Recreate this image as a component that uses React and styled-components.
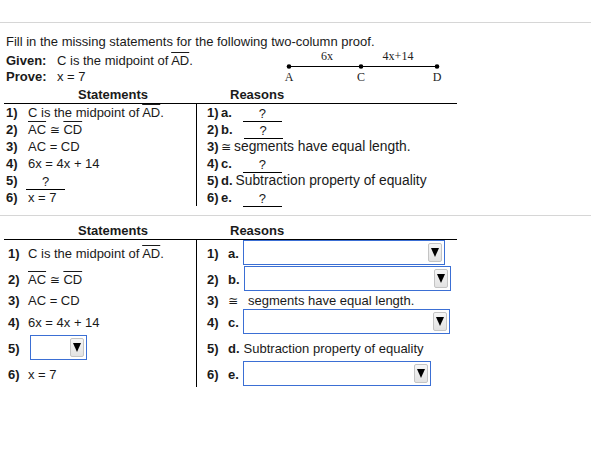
import styled, { createGlobalStyle } from "styled-components";

const GlobalStyle = createGlobalStyle`
    body{
        margin: 0;
        background: #fff;
        font-family: "Liberation Sans", Arial, sans-serif;
        font-size: 13px;
        color: #1a1a1a;
    }
`

function firstRows(){
    return [
        { n: '1)', s: <>C is the midpoint of <Over>AD</Over>.</>, l: 'a.', r: <Blank>?</Blank> },
        { n: '2)', s: <><Over>AC</Over> <Cong>≅</Cong> <Over>CD</Over></>, l: 'b.', r: <Blank>?</Blank> },
        { n: '3)', s: 'AC = CD', l: <Cong>≅</Cong>, r: 'segments have equal length.', plain: true, cong: true },
        { n: '4)', s: '6x = 4x + 14', l: 'c.', r: <Blank>?</Blank> },
        { n: '5)', s: <Blank left>?</Blank>, l: 'd.', r: 'Subtraction property of equality', plain: true },
        { n: '6)', s: 'x = 7', l: 'e.', r: <Blank>?</Blank> },
    ];
}

function secondRows(){
    return [
        { n: '1)', s: <>C is the midpoint of <Over>AD</Over>.</>, l: 'a.', r: <Select width={202} />, tall: true },
        { n: '2)', s: <><Over>AC</Over> <Cong>≅</Cong> <Over>CD</Over></>, l: 'b.', r: <Select width={207} />, tall: true },
        { n: '3)', s: 'AC = CD', l: <Cong>≅</Cong>, r: 'segments have equal length.', plain: true, cong: true },
        { n: '4)', s: '6x = 4x + 14', l: 'c.', r: <Select width={207} />, tall: true },
        { n: '5)', s: <Select width={57} indent={2} />, l: 'd.', r: 'Subtraction property of equality', plain: true, tall: true },
        { n: '6)', s: 'x = 7', l: 'e.', r: <Select width={188} />, tall: true },
    ];
}

// gap after the letter column, per table
function letterGap(row, wide){
    if (wide) return row.cong ? 10 : 4;
    return row.plain ? 3 : 3;
}

function Select({ width, indent = 0 }){
    return(
        <Drop style={{ width }} indent={indent}>
            <Arrow><Tri /></Arrow>
        </Drop>
    )
}

function Proof({ rows, wide }){
    return(
        <Table>
            <HeadCell pad={74}>Statements</HeadCell>
            <HeadCell pad={33}>Reasons</HeadCell>
            {rows.map((row, i) =>
                <Row key={i} tall={row.tall}>
                    <StatementCell wide={wide}>
                        <Num width={wide ? 20 : 22}>{row.n}</Num>
                        <Content>{row.s}</Content>
                    </StatementCell>
                    <ReasonCell>
                        <Num width={wide ? 21 : 14}>{row.n}</Num>
                        <Letter gap={letterGap(row, wide)}>{row.l}</Letter>
                        <Content big={!wide && row.plain}>{row.r}</Content>
                    </ReasonCell>
                </Row>
            )}
        </Table>
    )
}

export default function App(){
    return(
        <Page>
            <GlobalStyle />
            <Rule top={22} />
            <Intro>
                <p>Fill in the missing statements for the following two-column proof.</p>
                <GivenBlock>
                    <Facts>
                        <Fact><b>Given:</b><span>C is the midpoint of <Over>AD</Over>.</span></Fact>
                        <Fact><b>Prove:</b><span>x = 7</span></Fact>
                    </Facts>
                    <Diagram width="166" height="37" viewBox="0 0 166 37">
                        <line x1="9" y1="16.5" x2="157" y2="16.5" stroke="#000" strokeWidth="1" />
                        <circle cx="9" cy="16.5" r="2.3" fill="#000" />
                        <circle cx="81" cy="16.5" r="2.3" fill="#000" />
                        <circle cx="157" cy="16.5" r="2.3" fill="#000" />
                        <text x="47" y="10" textAnchor="middle">6x</text>
                        <text x="118" y="10" textAnchor="middle">4x+14</text>
                        <text x="9" y="31" textAnchor="middle">A</text>
                        <text x="81" y="31" textAnchor="middle">C</text>
                        <text x="157" y="31" textAnchor="middle">D</text>
                    </Diagram>
                </GivenBlock>
            </Intro>
            <Proof rows={firstRows()} />
            <Rule top={9} />
            <Spacer />
            <Proof rows={secondRows()} wide />
        </Page>
    )
}

const Page = styled.div`
    width: 591px;
    min-height: 476px;
`

const Rule = styled.div`
    margin-top: ${props => props.top}px;
    border-top: 1px solid #d6d6d6;
`

const Spacer = styled.div`
    height: 7px;
`

const Intro = styled.div`
    padding: 11px 0 0 6px;
    p{
        margin: 0;
        line-height: 16px;
    }
`

const GivenBlock = styled.div`
    display: flex;
    height: 37px;
`

const Facts = styled.div`
    width: 274px;
    padding-top: 3px;
`

const Fact = styled.div`
    display: flex;
    line-height: 16px;
    b{
        width: 51px;
        font-weight: bold;
    }
`

const Diagram = styled.svg`
    display: block;
    text{
        font-family: "Liberation Serif", "Times New Roman", serif;
        font-size: 12px;
        fill: #222;
    }
`

const Content = styled.span`
    white-space: pre;
    font-size: ${props => (props.big ? 13.8 : 13)}px;
`

const Over = styled.span`
    text-decoration: overline;
`

const Cong = styled.span`
    font-family: "DejaVu Sans", sans-serif;
    font-size: 12px;
    font-weight: normal;
`

const Blank = styled.span`
    display: inline-block;
    width: 39px;
    margin-left: ${props => (props.left ? -2 : 8)}px;
    text-align: center;
    border-bottom: 1px solid #000;
    line-height: 15px;
    position: relative;
    top: 1px;
`

const Table = styled.div`
    display: grid;
    grid-template-columns: 193px 260px;
    margin-left: 4px;
    width: 453px;
`

const HeadCell = styled.div`
    padding-left: ${props => props.pad}px;
    height: 16px;
    line-height: 16px;
    font-weight: bold;
    border-bottom: 1px solid #000;
`

const Row = styled.div`
    display: contents;
    & > div{
        min-height: ${props => (props.tall ? 26 : 17)}px;
    }
`

const StatementCell = styled.div`
    display: flex;
    align-items: center;
    padding-left: ${props => (props.wide ? 4 : 2)}px;
    border-right: 1px solid #000;
    box-sizing: border-box;
    white-space: nowrap;
`

const ReasonCell = styled.div`
    display: flex;
    align-items: center;
    padding-left: 10px;
    white-space: nowrap;
`

const Num = styled.span`
    width: ${props => props.width}px;
    flex-shrink: 0;
    font-weight: bold;
`

const Letter = styled.span`
    font-weight: bold;
    margin-right: ${props => props.gap}px;
`

const Drop = styled.div`
    height: 25px;
    margin: 0 0 1px ${props => props.indent}px;
    box-sizing: border-box;
    border: 1px solid #3b6fd4;
    background: #fff;
    display: flex;
    justify-content: flex-end;
    align-items: center;
    padding-right: 2px;
`

const Arrow = styled.div`
    width: 14px;
    height: 19px;
    box-sizing: border-box;
    border: 1px solid #c4c4c4;
    border-radius: 2px;
    background: linear-gradient(#f6f6f6, #e2e2e2);
    display: flex;
    justify-content: center;
    align-items: center;
`

const Tri = styled.span`
    width: 0;
    height: 0;
    border-left: 4px solid transparent;
    border-right: 4px solid transparent;
    border-top: 9px solid #000;
`
